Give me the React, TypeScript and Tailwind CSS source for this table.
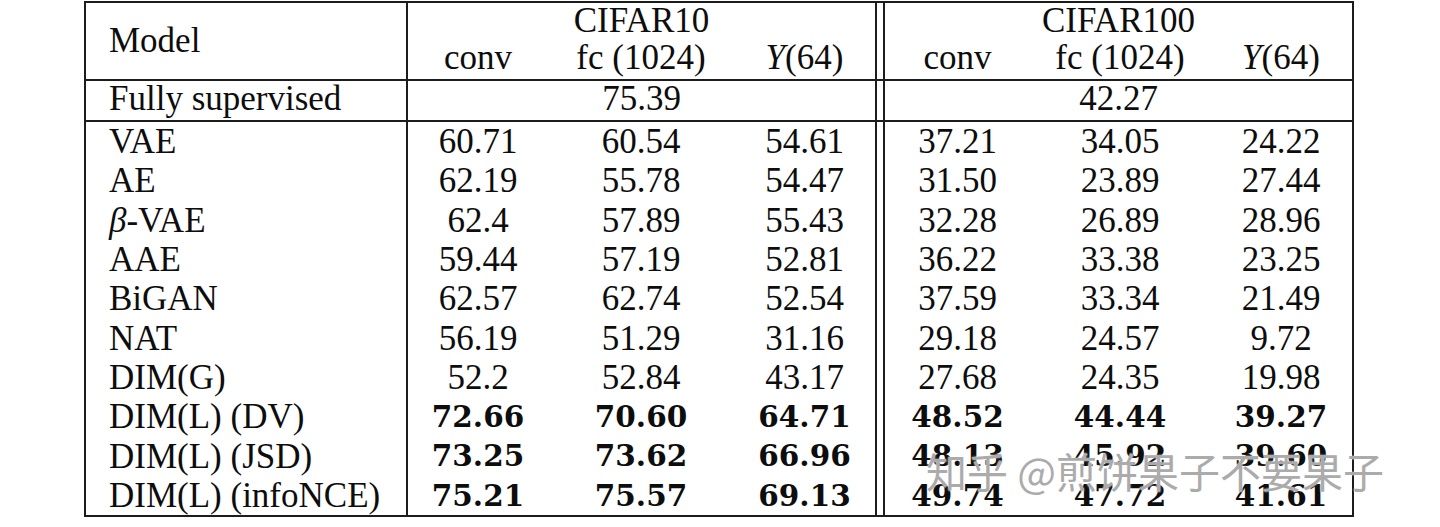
const rows = [
  { name: "VAE", v: ["60.71", "60.54", "54.61", "37.21", "34.05", "24.22"] },
  { name: "AE", v: ["62.19", "55.78", "54.47", "31.50", "23.89", "27.44"] },
  { name: "β-VAE", v: ["62.4", "57.89", "55.43", "32.28", "26.89", "28.96"], beta: true },
  { name: "AAE", v: ["59.44", "57.19", "52.81", "36.22", "33.38", "23.25"] },
  { name: "BiGAN", v: ["62.57", "62.74", "52.54", "37.59", "33.34", "21.49"] },
  { name: "NAT", v: ["56.19", "51.29", "31.16", "29.18", "24.57", "9.72"] },
  { name: "DIM(G)", v: ["52.2", "52.84", "43.17", "27.68", "24.35", "19.98"] },
  { name: "DIM(L) (DV)", v: ["72.66", "70.60", "64.71", "48.52", "44.44", "39.27"], bold: true },
  { name: "DIM(L) (JSD)", v: ["73.25", "73.62", "66.96", "48.13", "45.92", "39.60"], bold: true },
  { name: "DIM(L) (infoNCE)", v: ["75.21", "75.57", "69.13", "49.74", "47.72", "41.61"], bold: true },
];

const cols = "grid grid-cols-[322px_140px_186px_141px_10px_145px_180px_142px]";

const Num = ({ value, bold }: { value: string; bold?: boolean }) => (
  <div
    className={
      bold
        ? "flex items-center justify-center font-['DejaVu_Serif',serif] font-bold text-[29.5px]"
        : "flex items-center justify-center text-[35px]"
    }
  >
    {value}
  </div>
);

const Sep = () => <div className="border-x-2 border-[#1c1c1c]" />;

const YHead = () => (
  <span>
    <span className="italic">Y</span>(64)
  </span>
);

const App = () => {
  return (
    <div className="relative w-[1440px] h-[527px] bg-white text-[#0d0d0d] font-['Liberation_Serif',serif]">
      <div className="ml-[84px] mt-px w-[1270px] border-2 border-[#1c1c1c]">
        {/* Header */}
        <div className={`${cols} h-[78px] border-b-2 border-[#1c1c1c] text-[35px] leading-none`}>
          <div className="border-r-2 border-[#1c1c1c] pl-[23px] pt-[20px]">Model</div>
          <div className="col-span-3 grid grid-cols-[140px_186px_141px] content-start">
            <div className="col-span-3 text-center">CIFAR10</div>
            <div className="pt-[2px] text-center">conv</div>
            <div className="pt-[2px] text-center">fc (1024)</div>
            <div className="pt-[2px] text-center"><YHead /></div>
          </div>
          <Sep />
          <div className="col-span-3 grid grid-cols-[145px_180px_142px] content-start">
            <div className="col-span-3 text-center">CIFAR100</div>
            <div className="pt-[2px] text-center">conv</div>
            <div className="pt-[2px] text-center">fc (1024)</div>
            <div className="pt-[2px] text-center"><YHead /></div>
          </div>
        </div>

        {/* Fully supervised */}
        <div className={`${cols} h-[41px] border-b-2 border-[#1c1c1c] text-[35px] leading-none`}>
          <div className="flex items-center border-r-2 border-[#1c1c1c] pb-[5px] pl-[23px]">Fully supervised</div>
          <div className="col-span-3 flex items-center justify-center pb-[5px]">75.39</div>
          <Sep />
          <div className="col-span-3 flex items-center justify-center pb-[5px]">42.27</div>
        </div>

        {/* Results */}
        {rows.map((r) => (
          <div key={r.name} className={`${cols} h-[39.3px] text-[35px] leading-none`}>
            <div className="flex items-center border-r-2 border-[#1c1c1c] pl-[23px]">
              {r.beta ? (
                <span>
                  <span className="italic">β</span>-VAE
                </span>
              ) : (
                r.name
              )}
            </div>
            <Num value={r.v[0]} bold={r.bold} />
            <Num value={r.v[1]} bold={r.bold} />
            <Num value={r.v[2]} bold={r.bold} />
            <Sep />
            <Num value={r.v[3]} bold={r.bold} />
            <Num value={r.v[4]} bold={r.bold} />
            <Num value={r.v[5]} bold={r.bold} />
          </div>
        ))}
      </div>

      {/* Watermark */}
      <div className="absolute left-[926px] top-[449px] font-['Noto_Sans_CJK_SC',sans-serif] text-[41px] leading-none text-[#ababab] [text-shadow:0_0_2px_#ffffff]">
        知乎 @煎饼果子不要果子
      </div>
    </div>
  );
};

export default App;
